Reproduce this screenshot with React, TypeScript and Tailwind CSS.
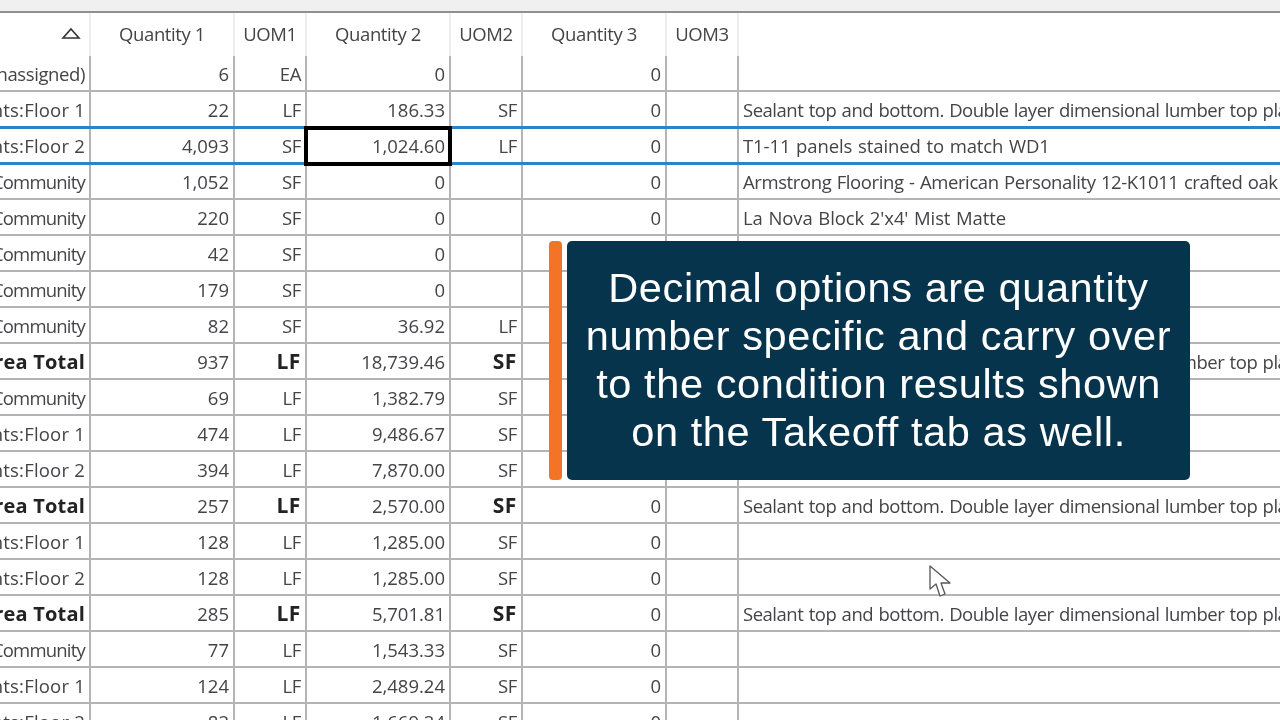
const headers = ["", "Quantity 1", "UOM1", "Quantity 2", "UOM2", "Quantity 3", "UOM3", ""];

const sealant = "Sealant top and bottom. Double layer dimensional lumber top plate and bottom plate";

type Row = {
  name: string;
  q1: string;
  u1: string;
  q2: string;
  u2?: string;
  q3?: string;
  desc?: string;
  total?: boolean;
  selected?: boolean;
  above?: boolean;
  below?: boolean;
};

const rows: Row[] = [
  { name: "(Unassigned)", q1: "6", u1: "EA", q2: "0", q3: "0" },
  { name: "Elements:Floor 1", q1: "22", u1: "LF", q2: "186.33", u2: "SF", q3: "0", desc: sealant, above: true },
  { name: "Elements:Floor 2", q1: "4,093", u1: "SF", q2: "1,024.60", u2: "LF", q3: "0", desc: "T1-11 panels stained to match WD1", selected: true },
  { name: "Community", q1: "1,052", u1: "SF", q2: "0", q3: "0", desc: "Armstrong Flooring - American Personality 12-K1011 crafted oak plank", below: true },
  { name: "Community", q1: "220", u1: "SF", q2: "0", q3: "0", desc: "La Nova Block 2'x4' Mist Matte" },
  { name: "Community", q1: "42", u1: "SF", q2: "0", q3: "0" },
  { name: "Community", q1: "179", u1: "SF", q2: "0", q3: "0" },
  { name: "Community", q1: "82", u1: "SF", q2: "36.92", u2: "LF", q3: "0" },
  { name: "Area Total", q1: "937", u1: "LF", q2: "18,739.46", u2: "SF", q3: "0", desc: sealant, total: true },
  { name: "Community", q1: "69", u1: "LF", q2: "1,382.79", u2: "SF", q3: "0" },
  { name: "Elements:Floor 1", q1: "474", u1: "LF", q2: "9,486.67", u2: "SF", q3: "0" },
  { name: "Elements:Floor 2", q1: "394", u1: "LF", q2: "7,870.00", u2: "SF", q3: "0" },
  { name: "Area Total", q1: "257", u1: "LF", q2: "2,570.00", u2: "SF", q3: "0", desc: sealant, total: true },
  { name: "Elements:Floor 1", q1: "128", u1: "LF", q2: "1,285.00", u2: "SF", q3: "0" },
  { name: "Elements:Floor 2", q1: "128", u1: "LF", q2: "1,285.00", u2: "SF", q3: "0" },
  { name: "Area Total", q1: "285", u1: "LF", q2: "5,701.81", u2: "SF", q3: "0", desc: sealant, total: true },
  { name: "Community", q1: "77", u1: "LF", q2: "1,543.33", u2: "SF", q3: "0" },
  { name: "Elements:Floor 1", q1: "124", u1: "LF", q2: "2,489.24", u2: "SF", q3: "0" },
  { name: "Elements:Floor 2", q1: "82", u1: "LF", q2: "1,669.24", u2: "SF", q3: "0" },
];

const gridCols = "grid grid-cols-[91px_144px_72px_144px_72px_144px_72px_1fr]";
const cell = "flex items-center justify-end whitespace-nowrap border-r-2 border-[#b4b4b6] pr-1";
const boldUom = "font-bold text-[21px] tracking-[0.6px] text-[#222]";

function rowClass(r: Row) {
  if (r.above) return "h-[37px] border-b-[3px] border-[#2a85c8]";
  if (r.selected) return "h-9 border-b-[3px] border-[#2a85c8]";
  if (r.below) return "h-[35px] border-b-2 border-[#b4b4b6]";
  return "h-9 border-b-2 border-[#b4b4b6]";
}

function nameClass(r: Row) {
  if (r.total) return "font-bold text-[20px] tracking-[0.2px] text-[#222]";
  if (r.name === "Community") return "tracking-[-0.8px]";
  if (r.name.startsWith("Elements")) return "tracking-[0.2px]";
  return "";
}

function descClass(r: Row) {
  if (r.desc === sealant) return "tracking-[-0.48px] [word-spacing:1px]";
  if (r.below) return "[word-spacing:1px]";
  return "tracking-[-0.1px] [word-spacing:1px]";
}

export default function App() {
  return (
    <div className="relative h-screen w-full overflow-hidden bg-white font-['Open_Sans','Liberation_Sans',sans-serif] text-[18.5px] tracking-[-0.4px] text-[#444448] blur-[0.4px]">
      <div className="h-[11px] bg-[#f0f0f0]" />
      <div className="h-[2px] bg-[#8f8f8f]" />

      <div className={`${gridCols} h-[43px]`}>
        {headers.map((h, i) => (
          <div
            key={i}
            className={`flex items-center justify-center border-[#ececec] pb-0.5 ${i < 7 ? "border-r-2" : ""} ${i === 0 ? "justify-end pr-2" : ""}`}
          >
            {i === 0 ? (
              <svg width="20" height="14" viewBox="0 0 20 14">
                <path d="M10 2 L18 11 H2 Z" fill="none" stroke="#333" strokeWidth="1.6" />
              </svg>
            ) : (
              h
            )}
          </div>
        ))}
      </div>

      {rows.map((r, i) => {
        const pad = r.selected || r.below ? "" : "pt-0.5";
        return (
          <div key={i} className={`${gridCols} ${rowClass(r)}`}>
            <div className={`${cell} ${pad} overflow-hidden ${nameClass(r)}`}>{r.name}</div>
            <div className={`${cell} ${pad} tracking-normal`}>{r.q1}</div>
            <div className={`${cell} ${pad} ${r.total ? boldUom : ""}`}>{r.u1}</div>
            <div className={`${cell} ${pad} relative tracking-normal`}>
              {r.q2}
              {r.selected && (
                <div className="absolute -top-[3px] -right-[3px] -bottom-[4px] -left-[3px] z-10 border-4 border-black" />
              )}
            </div>
            <div className={`${cell} ${pad} ${r.total ? boldUom : ""}`}>{r.u2}</div>
            <div className={`${cell} ${pad} tracking-normal`}>{r.q3}</div>
            <div className={cell} />
            <div className={`flex items-center overflow-hidden whitespace-nowrap pl-1 ${pad} ${descClass(r)}`}>{r.desc}</div>
          </div>
        );
      })}

      {/* callout over the table */}
      <div className="absolute left-[549px] top-[241px] z-20 flex h-[239px] gap-[5px]">
        <div className="w-[13px] rounded-[4px] bg-[#f37327]" />
        <div className="flex w-[623px] items-center justify-center rounded-[5px] bg-[#07344d] pb-0.5 text-center font-['Liberation_Sans',sans-serif] text-[41.5px] leading-[48px] tracking-[0.6px] text-white">
          <p>
            Decimal options are quantity
            <br />
            number specific and carry over
            <br />
            to the condition results shown
            <br />
            on the Takeoff tab as well.
          </p>
        </div>
      </div>

      {/* mouse pointer */}
      <svg width="24" height="34" viewBox="0 0 24 34" className="absolute left-[929px] top-[565px]">
        <path
          d="M1 1 V24 L7 19 L11 31 L16 29 L12 18 H21 Z"
          fill="#fff"
          stroke="#555"
          strokeWidth="1.3"
          strokeLinejoin="round"
        />
      </svg>
    </div>
  );
}
